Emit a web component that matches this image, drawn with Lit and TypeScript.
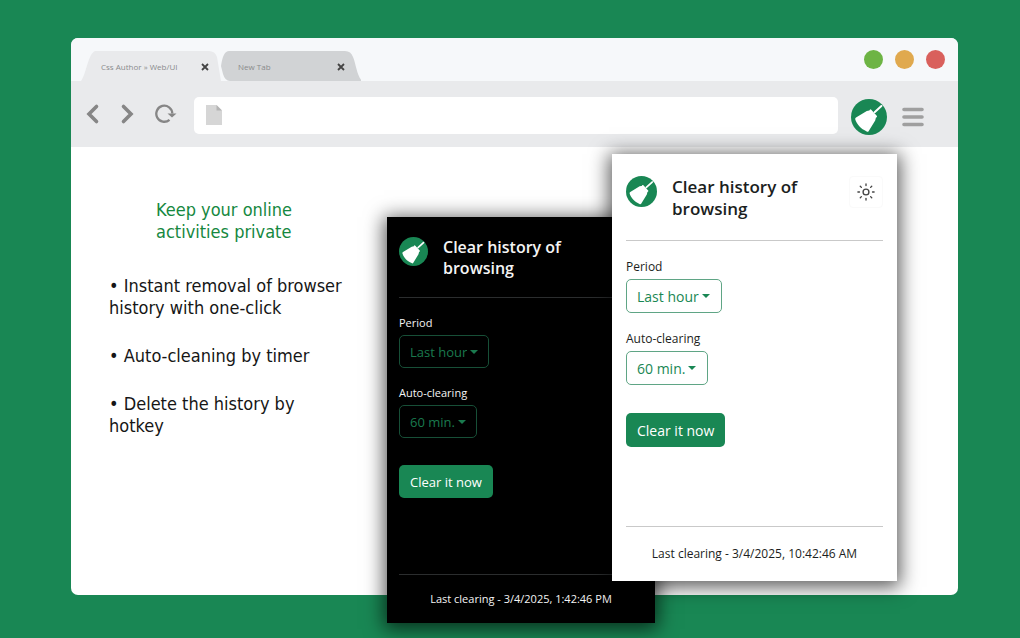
import { LitElement, html, css, svg } from "lit";
import { customElement, property } from "lit/decorators.js";

@customElement("broom-logo")
export class BroomLogo extends LitElement {
  static styles = css`
    :host { display: block; flex: none; }
    .logo { display: block; width: 100%; height: auto; }
  `;
  render() {
    return html`<svg class="logo" viewBox="0 0 36 36" aria-hidden="true">
      <circle cx="18" cy="18" r="18" fill="#198754" />
      <path d="M23.6 13.2 30.4 7" stroke="#fff" stroke-width="2" stroke-linecap="round" />
      <path d="M19.6 11.2 25.2 17.4 24.2 21.4 17.6 32.2Q16.8 33.2 15.7 32.4C13 31 10 29.5 8.3 27.2 6.4 25 4.8 22.8 4.2 20.3Q4 19.2 5 18.6L15.8 12Z" fill="#fff" />
      <path d="M19.5 11.4 25 17.4" stroke="#fff" stroke-width="2" stroke-linecap="round" />
    </svg>`;
  }
}

const ray = (angle: number) =>
  svg`<path d="M8 0.8V2.2" transform="rotate(${angle} 8 8)" />`;

@customElement("history-popup")
export class HistoryPopup extends LitElement {
  @property({ attribute: "last-clearing" }) lastClearing = "";

  static styles = css`
    :host {
      --text: #1b1e21;
      --line: #c9c9c9;
      --surface: #fff;
      --accent: #198754;
      --outline: #5fa585;
      --toggle: #fafafa;
      --logo: 31px;
      --title: 17px;
      --title-line: 22px;
      --small: 12px;
      --control: 34px;
      --control-text: 14px;
      --pad-right: 22px;
      --caret-gap: 12px;
      --field-gap: 18px;
      --action-gap: 28px;
      --foot: 54px;
      box-sizing: border-box;
      display: flex;
      flex-direction: column;
      padding: 0 14px;
      background: var(--surface);
      color: var(--text);
      font-family: "Open Sans", "Noto Sans", sans-serif;
      box-shadow: 0 3px 18px 3px rgba(0, 0, 0, 0.65);
    }
    :host([dark]) {
      --text: #f4f4f4;
      --line: #2b2d2e;
      --surface: #000;
      --accent: #1a7a4e;
      --outline: #174f37;
      --toggle: #333;
      --logo: 29px;
      --title: 16px;
      --title-line: 21px;
      --small: 11px;
      --control: 33px;
      --control-text: 13px;
      --pad-right: 21px;
      --caret-gap: 11px;
      --field-gap: 17px;
      --action-gap: 27px;
      --foot: 48px;
      padding: 0 12px;
    }
    .head {
      display: flex;
      align-items: center;
      padding: 22px 0 20px;
      border-bottom: 1px solid var(--line);
    }
    :host([dark]) .head { padding: 20px 0 18px; }
    .logo { width: var(--logo); align-self: flex-start; }
    .title {
      flex: 1;
      margin: 0 40px 0 15px;
      font-size: var(--title);
      line-height: var(--title-line);
      font-weight: 600;
    }
    .toggle {
      display: grid;
      place-items: center;
      width: 34px;
      height: 32px;
      padding: 0;
      align-self: flex-start;
      border: 1px solid var(--toggle);
      border-radius: 4px;
      background: none;
      color: #444;
    }
    :host([dark]) .toggle { width: 31px; }
    .sun { width: 18px; height: 18px; }
    .form {
      flex: 1;
      display: flex;
      flex-direction: column;
      align-items: flex-start;
      padding-top: 18px;
    }
    :host([dark]) .form { padding-top: 17px; }
    .label { font-size: var(--small); line-height: 16px; margin-bottom: 4px; }
    .picker { display: grid; align-items: center; margin-bottom: var(--field-gap); }
    .select, .caret { grid-area: 1 / 1; }
    .select {
      appearance: none;
      field-sizing: content;
      height: var(--control);
      padding: 0 var(--pad-right) 0 10px;
      border: 1px solid var(--outline);
      border-radius: 5px;
      background: transparent;
      color: var(--accent);
      font: var(--control-text) "Open Sans", "Noto Sans", sans-serif;
    }
    .caret {
      justify-self: end;
      width: 8px;
      height: 4px;
      margin-right: var(--caret-gap);
      fill: var(--accent);
      pointer-events: none;
    }
    .action {
      height: var(--control);
      margin-top: calc(var(--action-gap) - var(--field-gap));
      padding: 0 11px;
      border: 0;
      border-radius: 5px;
      background: #198754;
      color: #fff;
      font: var(--control-text) "Open Sans", "Noto Sans", sans-serif;
    }
    .foot {
      border-top: 1px solid var(--line);
      height: var(--foot);
      display: grid;
      place-items: center;
      font-size: var(--small);
      line-height: 16px;
      white-space: nowrap;
    }
  `;

  render() {
    return html`
      <header class="head">
        <broom-logo class="logo"></broom-logo>
        <h2 class="title">Clear history of browsing</h2>
        <button class="toggle" type="button" aria-label="Switch theme">
          <svg class="sun" viewBox="0 0 16 16" fill="none" stroke="currentColor" stroke-width="1.2" stroke-linecap="round">
            <circle cx="8" cy="8" r="2.6" />
            ${[0, 45, 90, 135, 180, 225, 270, 315].map(ray)}
          </svg>
        </button>
      </header>
      <section class="form">
        <label class="label" for="period">Period</label>
        <div class="picker">
          <select class="select" id="period"><option>Last hour</option></select>
          <svg class="caret" viewBox="0 0 8 4"><path d="M0 0h8L4 4z" /></svg>
        </div>
        <label class="label" for="auto">Auto-clearing</label>
        <div class="picker">
          <select class="select" id="auto"><option>60 min.</option></select>
          <svg class="caret" viewBox="0 0 8 4"><path d="M0 0h8L4 4z" /></svg>
        </div>
        <button class="action" type="button">Clear it now</button>
      </section>
      <footer class="foot"><span>Last clearing - ${this.lastClearing}</span></footer>
    `;
  }
}

@customElement("app-root")
export class AppRoot extends LitElement {
  static styles = css`
    :host {
      box-sizing: border-box;
      display: flex;
      min-height: 100vh;
      padding: 38px 62px 43px 71px;
      overflow: hidden;
      background: #198754;
      font-family: "Open Sans", "Noto Sans", sans-serif;
    }
    .window {
      position: relative;
      flex: 1;
      display: flex;
      flex-direction: column;
      border-radius: 7px;
      background: #fff;
    }
    .tabs {
      display: flex;
      align-items: flex-end;
      height: 43px;
      padding: 0 13px 0 10px;
      box-sizing: border-box;
      border-radius: 7px 7px 0 0;
      background: #f6f8fa;
    }
    .tab {
      display: grid;
      width: 140px;
      height: 31px;
      color: #8a8b8c;
      font-size: 8px;
    }
    .tab > * { grid-area: 1 / 1; }
    .shape { width: 100%; height: 100%; }
    .tab-row {
      display: flex;
      align-items: center;
      justify-content: space-between;
      padding: 2px 12px 0 20px;
    }
    .tab-row.back { padding: 2px 16px 0 17px; }
    .close {
      display: grid;
      padding: 0;
      border: 0;
      background: none;
      color: #444;
    }
    .x { width: 8px; height: 8px; }
    .lights { display: flex; gap: 12px; margin: 0 0 12px auto; }
    .light { width: 19px; height: 19px; border-radius: 50%; }
    .green { background: #6db444; }
    .amber { background: #e0a94e; }
    .red { background: #d9605c; }
    .toolbar {
      display: flex;
      align-items: center;
      height: 66px;
      padding: 0 33px 0 14px;
      background: #e9eaec;
    }
    .nav { display: flex; gap: 13px; margin-right: 17px; }
    .tool {
      display: grid;
      padding: 0;
      border: 0;
      background: none;
      color: #868686;
    }
    .glyph { width: 22px; height: 22px; }
    .address {
      flex: 1;
      display: flex;
      align-items: center;
      height: 37px;
      padding-left: 12px;
      border-radius: 5px;
      margin-top: 2px;
      background: #fff;
    }
    .file { width: 16px; height: 20px; }
    .url {
      flex: 1;
      min-width: 0;
      margin-left: 8px;
      border: 0;
      outline: 0;
      background: none;
      font: 14px "Open Sans", sans-serif;
    }
    .logo { width: 36px; margin: 6px 14px 0 13px; }
    .menu { margin-top: 6px; }
    .bars { width: 24px; height: 20px; }
    .page {
      padding: 52px 38px;
      color: #161616;
      font-family: "DejaVu Sans Condensed", "DejaVu Sans", sans-serif;
      font-stretch: condensed;
      font-size: 18px;
      line-height: 22px;
    }
    .lead {
      width: 160px;
      margin: 0 0 32px 47px;
      color: #16883f;
      font-size: inherit;
      font-weight: 400;
    }
    .features {
      display: grid;
      gap: 26px;
      width: 245px;
      margin: 0;
      padding: 0;
      list-style: none;
    }
    .popup { position: absolute; }
    .night { top: 179px; right: 303px; width: 268px; height: 406px; }
    .day { top: 116px; right: 61px; width: 285px; height: 427px; }
  `;

  private close(name: string) {
    return html`<button class="close" type="button" aria-label="Close ${name}">
      <svg class="x" viewBox="0 0 8 8" stroke="currentColor" stroke-width="1.8"><path d="M1 1l6 6M7 1l-6 6" /></svg>
    </button>`;
  }

  render() {
    return html`
      <main class="window">
        <div class="tabs">
          <div class="tab">
            <svg class="shape" viewBox="0 0 140 31" preserveAspectRatio="none"><path d="M0 31C5 25 7 4 14 1H128Q134 1 136 7L140 31Z" fill="#e9eaec" /></svg>
            <div class="tab-row"><span>Css Author » Web/UI</span>${this.close("Css Author")}</div>
          </div>
          <div class="tab">
            <svg class="shape" viewBox="0 0 140 31" preserveAspectRatio="none"><path d="M8 1H124Q130 1 132 7C135 14 136 26 141 31H9Q4 31 2 24L0 16Q2 1 8 1Z" fill="#d1d3d5" /></svg>
            <div class="tab-row back"><span>New Tab</span>${this.close("New Tab")}</div>
          </div>
          <div class="lights">
            <span class="light green"></span><span class="light amber"></span><span class="light red"></span>
          </div>
        </div>
        <div class="toolbar">
          <nav class="nav">
            <button class="tool" type="button" aria-label="Back">
              <svg class="glyph" viewBox="0 0 22 22" fill="none" stroke="currentColor" stroke-width="3.6"><path d="M11.5 3.5 4 11 11.5 18.5" stroke-linecap="round" /></svg>
            </button>
            <button class="tool" type="button" aria-label="Forward">
              <svg class="glyph" viewBox="0 0 22 22" fill="none" stroke="currentColor" stroke-width="3.6"><path d="M3.5 3.5 11 11 3.5 18.5" stroke-linecap="round" /></svg>
            </button>
            <button class="tool" type="button" aria-label="Reload">
              <svg class="glyph" viewBox="0 0 22 22" fill="none" stroke="currentColor" stroke-width="2.3"><path d="M14.5 16.8A8 8 0 1 1 17.3 10.5" /><path d="M12.5 10.5H21.5L17 14.5Z" fill="currentColor" stroke="none" /></svg>
            </button>
          </nav>
          <div class="address">
            <svg class="file" viewBox="0 0 16 20"><path d="M0 0H10.5L16 5.5V20H0Z" fill="#d6d6d6" /><path d="M10.5 0 16 5.5H10.5Z" fill="#b4b4b4" /></svg>
            <input class="url" type="text" aria-label="Address" />
          </div>
          <broom-logo class="logo"></broom-logo>
          <button class="tool menu" type="button" aria-label="Menu">
            <svg class="bars" viewBox="0 0 24 20" stroke="#9f9f9f" stroke-width="3.6" stroke-linecap="round"><path d="M3 2.5h18M3 10h18M3 17.5h18" /></svg>
          </button>
        </div>
        <section class="page">
          <h1 class="lead">Keep your online activities private</h1>
          <ul class="features">
            <li>• Instant removal of browser history with one-click</li>
            <li>• Auto-cleaning by timer</li>
            <li>• Delete the history by hotkey</li>
          </ul>
        </section>
        <history-popup class="popup night" dark last-clearing="3/4/2025, 1:42:46 PM"></history-popup>
        <history-popup class="popup day" last-clearing="3/4/2025, 10:42:46 AM"></history-popup>
      </main>
    `;
  }
}
